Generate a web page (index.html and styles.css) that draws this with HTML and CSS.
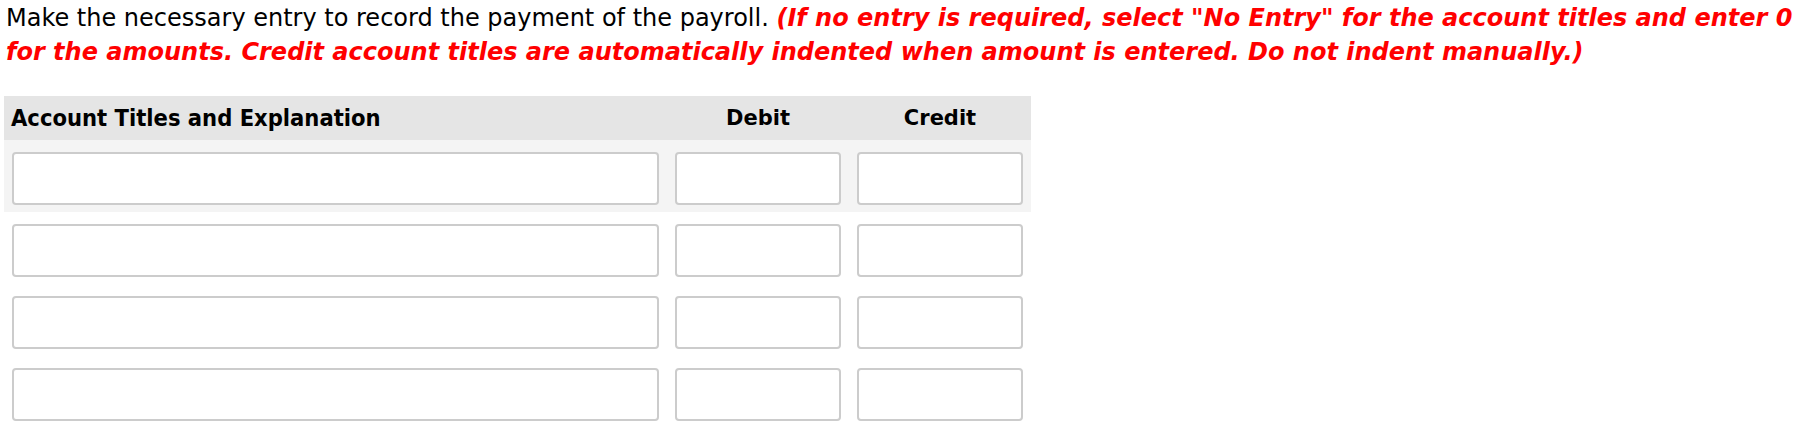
FILE: index.html
```html
<!DOCTYPE html>
<html lang="en">
<head>
<meta charset="utf-8">
<title>Payroll entry</title>
<link rel="stylesheet" href="styles.css">
</head>
<body>
<div class="page">
  <p class="prompt">Make the necessary entry to record the payment of the payroll. <em class="note">(If no entry is required, select "No Entry" for the account titles and enter 0 for the amounts. Credit account titles are automatically indented when amount is entered. Do not indent manually.)</em></p>

  <div class="journal">
    <div class="head">
      <div class="hcell hcell-title">Account Titles and Explanation</div>
      <div class="hcell hcell-num">Debit</div>
      <div class="hcell hcell-num">Credit</div>
    </div>
    <div class="row row-shaded">
      <div class="cell"><input class="field" type="text"></div>
      <div class="cell"><input class="field" type="text"></div>
      <div class="cell"><input class="field" type="text"></div>
    </div>
    <div class="row">
      <div class="cell"><input class="field" type="text"></div>
      <div class="cell"><input class="field" type="text"></div>
      <div class="cell"><input class="field" type="text"></div>
    </div>
    <div class="row">
      <div class="cell"><input class="field" type="text"></div>
      <div class="cell"><input class="field" type="text"></div>
      <div class="cell"><input class="field" type="text"></div>
    </div>
    <div class="row">
      <div class="cell"><input class="field" type="text"></div>
      <div class="cell"><input class="field" type="text"></div>
      <div class="cell"><input class="field" type="text"></div>
    </div>
  </div>
</div>
</body>
</html>
```

FILE: styles.css
```css
html, body {
  margin: 0;
  padding: 0;
  background: #ffffff;
}

.page {
  padding: 0 4px;
  font-family: "DejaVu Sans", Verdana, sans-serif;
  color: #000000;
}

.prompt {
  margin: 0;
  padding: 1px 0 0 2px;
  font-size: 24px;
  line-height: 34px;
}

.note {
  color: #ff0000;
  font-weight: bold;
  font-style: italic;
}

.journal {
  margin-top: 27px;
  width: 1027px;
}

.head,
.row {
  display: grid;
  grid-template-columns: 663px 182px 182px;
}

.head {
  background: #e5e5e5;
  height: 44px;
  align-items: center;
}

.hcell {
  font-weight: bold;
  font-size: 21px;
}

.hcell-title {
  padding-left: 7px;
  font-family: "DejaVu Sans Condensed", "DejaVu Sans", sans-serif;
  font-stretch: condensed;
  font-size: 23.5px;
}

.hcell-num {
  text-align: center;
}

.row-shaded {
  background: #f4f4f4;
}

.cell {
  padding: 12px 8px 7px;
}

.field {
  display: block;
  box-sizing: border-box;
  width: 100%;
  height: 53px;
  margin: 0;
  border: 2px solid #cccccc;
  border-radius: 4px;
  background: #ffffff;
  font: inherit;
}
```
